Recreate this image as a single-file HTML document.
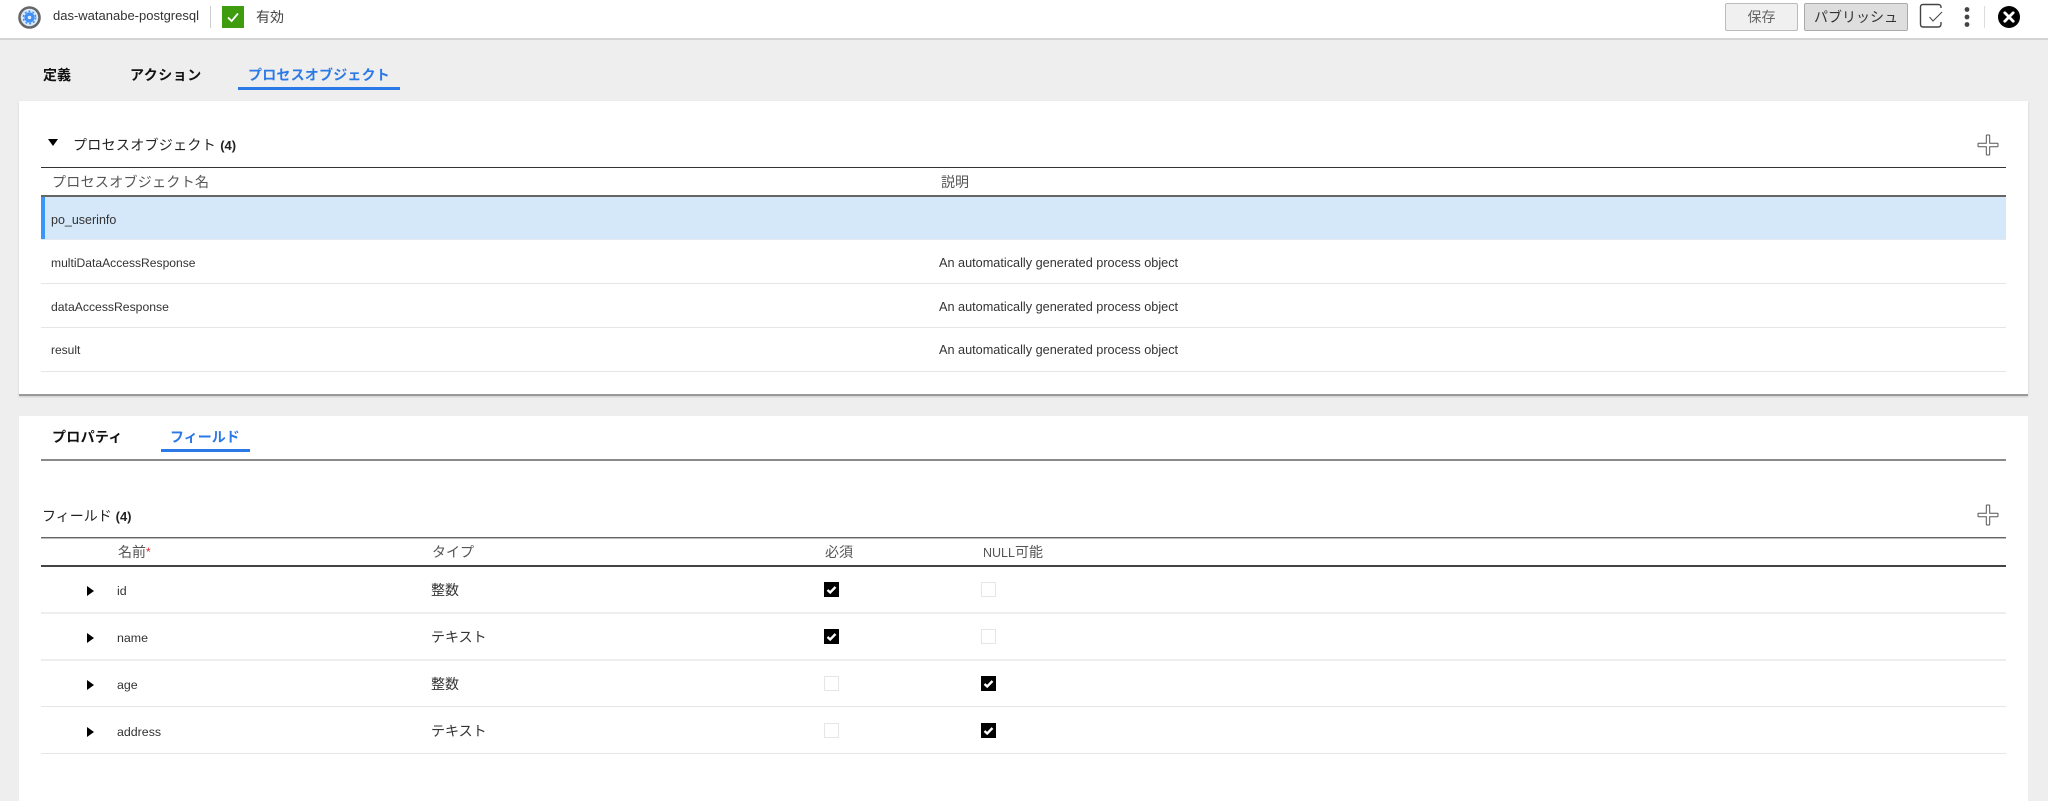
<!DOCTYPE html>
<html lang="ja">
<head>
<meta charset="utf-8">
<title>das-watanabe-postgresql</title>
<style>
html,body{margin:0;padding:0;width:2048px;height:801px;overflow:hidden;background:#eee;}
body{position:relative;font-family:"Liberation Sans","Noto Sans CJK JP",sans-serif;color:#333;}
.a{position:absolute;}
.t{position:absolute;white-space:nowrap;line-height:20px;height:20px;font-size:12.4px;}
.j{font-size:14px;}
.b{font-weight:700;color:#111;}
.blue{color:#2b79e6;font-weight:700;}
.l{position:absolute;left:41px;width:1965px;}
.cb{position:absolute;width:15px;height:15px;box-sizing:border-box;}
.off{border:1px solid #e6e6e6;background:#fff;}
.on{background:#000;}
.tri{position:absolute;width:0;height:0;border-left:7px solid #000;border-top:5.5px solid transparent;border-bottom:5.5px solid transparent;}
</style>
</head>
<body>
<!-- top bar -->
<div class="a" style="left:0;top:0;width:2048px;height:38px;background:#fff;border-bottom:2px solid #d4d4d4;"></div>
<svg class="a" style="left:18px;top:6px" width="23" height="23" viewBox="0 0 23 23">
<circle cx="11.5" cy="11.5" r="10" fill="#dbeafb" stroke="#666" stroke-width="2.6"/>
<circle cx="11.5" cy="11.5" r="5.2" fill="#3f8ff5"/>
<circle cx="11.5" cy="11.5" r="6.2" fill="none" stroke="#3f8ff5" stroke-width="1.5" stroke-dasharray="2 2"/>
<circle cx="11.5" cy="11.5" r="1.8" fill="#dbeafb"/>
</svg>
<div class="t" style="left:53px;top:6px;font-size:13px;color:#333;">das-watanabe-postgresql</div>
<div class="a" style="left:210px;top:6px;width:1px;height:22px;background:#ccc;"></div>
<svg class="a" style="left:222px;top:6px" width="22" height="22" viewBox="0 0 22 22">
<rect width="22" height="22" fill="#3f9c0e"/>
<path d="M6 11.5l3.6 3.6L16 7.5" fill="none" stroke="#fff" stroke-width="1.8"/>
</svg>
<div class="t j" style="left:256px;top:7px;color:#444;">有効</div>

<div class="a" style="left:1725px;top:3px;width:73px;height:28px;box-sizing:border-box;background:#f0f0f0;border:1px solid #bbb;border-radius:2px;text-align:center;font-size:14px;line-height:26px;color:#666;">保存</div>
<div class="a" style="left:1804px;top:3px;width:104px;height:28px;box-sizing:border-box;background:#dedede;border:1px solid #aaa;border-radius:2px;text-align:center;font-size:14px;line-height:26px;color:#333;white-space:nowrap;">パブリッシュ</div>
<svg class="a" style="left:1919px;top:3px;overflow:visible" width="24" height="25" viewBox="0 0 24 25">
<path d="M22 5V4Q22 1.5 19 1.5H4Q1.5 1.5 1.5 4V21Q1.5 24 4 24H19Q22 24 22 21V19" fill="none" stroke="#444" stroke-width="1.4"/>
<path d="M10.5 14l3.5 4 9-9" fill="none" stroke="#444" stroke-width="1"/>
</svg>
<svg class="a" style="left:1962px;top:6px" width="10" height="22" viewBox="0 0 10 22">
<circle cx="5" cy="3.5" r="2.4" fill="#444"/><circle cx="5" cy="11" r="2.4" fill="#444"/><circle cx="5" cy="18.5" r="2.4" fill="#444"/>
</svg>
<div class="a" style="left:1984px;top:6px;width:1px;height:22px;background:#ddd;"></div>
<svg class="a" style="left:1998px;top:6px" width="22" height="22" viewBox="0 0 22 22">
<circle cx="11" cy="11" r="11" fill="#000"/>
<path d="M6.8 6.8l8.4 8.4M15.2 6.8l-8.4 8.4" stroke="#fff" stroke-width="2.8" stroke-linecap="round"/>
</svg>

<!-- main tabs -->
<div class="t j b" style="left:43px;top:65px;">定義</div>
<div class="t j b" style="left:130px;top:65px;letter-spacing:.5px;">アクション</div>
<div class="t j blue" style="left:248px;top:65px;letter-spacing:.2px;">プロセスオブジェクト</div>
<div class="a" style="left:238px;top:87px;width:162px;height:3px;background:#2b79e6;"></div>

<!-- panel 1 -->
<div class="a" style="left:19px;top:101px;width:2009px;height:293px;background:#fff;border-bottom:2px solid #999;box-shadow:0 1px 2px rgba(0,0,0,.15);"></div>
<svg class="a" style="left:48px;top:139px" width="10" height="7" viewBox="0 0 10 7"><path d="M0 0H10L5 7Z" fill="#000"/></svg>
<div class="t j" style="left:73px;top:135px;color:#222;letter-spacing:.3px;">プロセスオブジェクト <b style="font-size:13px;letter-spacing:0">(4)</b></div>
<svg class="a" style="left:1977px;top:134px" width="22" height="22" viewBox="0 0 22 22">
<path d="M9.3 1.5Q9.3 1 10 1H12Q12.7 1 12.7 1.5V9.3H20.5Q21 9.3 21 10V12Q21 12.7 20.5 12.7H12.7V20.5Q12.7 21 12 21H10Q9.3 21 9.3 20.5V12.7H1.5Q1 12.7 1 12V10Q1 9.3 1.5 9.3H9.3Z" fill="#fff" stroke="#555" stroke-width="1"/>
</svg>
<div class="l" style="top:167px;height:1px;background:#333;"></div>
<div class="t j" style="left:52px;top:172px;color:#555;letter-spacing:.3px;">プロセスオブジェクト名</div>
<div class="t j" style="left:941px;top:172px;color:#555;">説明</div>
<div class="l" style="top:195px;height:2px;background:#666;"></div>
<div class="l" style="top:197px;height:42px;background:#d4e8fa;"></div>
<div class="a" style="left:41px;top:197px;width:4px;height:42px;background:#3a96f8;"></div>
<div class="l" style="top:239px;height:1px;background:#e2e8ee;"></div>
<div class="l" style="top:283px;height:1px;background:#e6e6e6;"></div>
<div class="l" style="top:327px;height:1px;background:#e6e6e6;"></div>
<div class="l" style="top:371px;height:1px;background:#e6e6e6;"></div>
<div class="t" style="left:51px;top:210px;font-size:12.5px;">po_userinfo</div>
<div class="t" style="left:51px;top:253px;font-size:12.1px;">multiDataAccessResponse</div>
<div class="t" style="left:51px;top:297px;font-size:12.2px;">dataAccessResponse</div>
<div class="t" style="left:51px;top:340px;font-size:12px;">result</div>
<div class="t" style="left:939px;top:253px;font-size:12.7px;">An automatically generated process object</div>
<div class="t" style="left:939px;top:297px;font-size:12.7px;">An automatically generated process object</div>
<div class="t" style="left:939px;top:340px;font-size:12.7px;">An automatically generated process object</div>

<!-- panel 2 -->
<div class="a" style="left:19px;top:416px;width:2009px;height:385px;background:#fff;"></div>
<div class="t j b" style="left:52px;top:427px;letter-spacing:.3px;">プロパティ</div>
<div class="t j blue" style="left:170px;top:427px;">フィールド</div>
<div class="a" style="left:161px;top:449px;width:89px;height:3px;background:#2b79e6;"></div>
<div class="l" style="top:459px;height:2px;background:#8a8a8a;"></div>
<div class="t j" style="left:42px;top:506px;color:#222;">フィールド <b style="font-size:13px">(4)</b></div>
<svg class="a" style="left:1977px;top:504px" width="22" height="22" viewBox="0 0 22 22">
<path d="M9.3 1.5Q9.3 1 10 1H12Q12.7 1 12.7 1.5V9.3H20.5Q21 9.3 21 10V12Q21 12.7 20.5 12.7H12.7V20.5Q12.7 21 12 21H10Q9.3 21 9.3 20.5V12.7H1.5Q1 12.7 1 12V10Q1 9.3 1.5 9.3H9.3Z" fill="#fff" stroke="#555" stroke-width="1"/>
</svg>
<div class="l" style="top:537px;height:1px;background:#666;"></div>
<div class="l" style="top:538px;height:1px;background:#bbb;"></div>
<div class="t j" style="left:118px;top:542px;color:#555;">名前<span style="color:#e8202a;font-size:12px;position:relative;top:-1px;">*</span></div>
<div class="t j" style="left:432px;top:542px;color:#555;">タイプ</div>
<div class="t j" style="left:825px;top:542px;color:#555;">必須</div>
<div class="t j" style="left:983px;top:542px;color:#555;"><span style="font-size:12.5px">NULL</span>可能</div>
<div class="l" style="top:565px;height:2px;background:#444;"></div>
<div class="l" style="top:612px;height:2px;background:#eee;"></div>
<div class="l" style="top:659px;height:2px;background:#eee;"></div>
<div class="l" style="top:706px;height:1px;background:#e6e6e6;"></div>
<div class="l" style="top:753px;height:1px;background:#e6e6e6;"></div>

<div class="tri" style="left:87px;top:586px;"></div>
<div class="tri" style="left:87px;top:633px;"></div>
<div class="tri" style="left:87px;top:680px;"></div>
<div class="tri" style="left:87px;top:727px;"></div>

<div class="t" style="left:117px;top:581px;">id</div>
<div class="t" style="left:117px;top:628px;">name</div>
<div class="t" style="left:117px;top:675px;">age</div>
<div class="t" style="left:117px;top:722px;">address</div>
<div class="t j" style="left:431px;top:580px;">整数</div>
<div class="t j" style="left:431px;top:627px;">テキスト</div>
<div class="t j" style="left:431px;top:674px;">整数</div>
<div class="t j" style="left:431px;top:721px;">テキスト</div>

<svg class="cb on" style="left:824px;top:582px" viewBox="0 0 15 15"><path d="M3.5 8l2.7 2.5 5.3-5.5" fill="none" stroke="#fff" stroke-width="2.4"/></svg>
<svg class="cb on" style="left:824px;top:629px" viewBox="0 0 15 15"><path d="M3.5 8l2.7 2.5 5.3-5.5" fill="none" stroke="#fff" stroke-width="2.4"/></svg>
<div class="cb off" style="left:824px;top:676px"></div>
<div class="cb off" style="left:824px;top:723px"></div>
<div class="cb off" style="left:981px;top:582px"></div>
<div class="cb off" style="left:981px;top:629px"></div>
<svg class="cb on" style="left:981px;top:676px" viewBox="0 0 15 15"><path d="M3.5 8l2.7 2.5 5.3-5.5" fill="none" stroke="#fff" stroke-width="2.4"/></svg>
<svg class="cb on" style="left:981px;top:723px" viewBox="0 0 15 15"><path d="M3.5 8l2.7 2.5 5.3-5.5" fill="none" stroke="#fff" stroke-width="2.4"/></svg>
</body>
</html>
